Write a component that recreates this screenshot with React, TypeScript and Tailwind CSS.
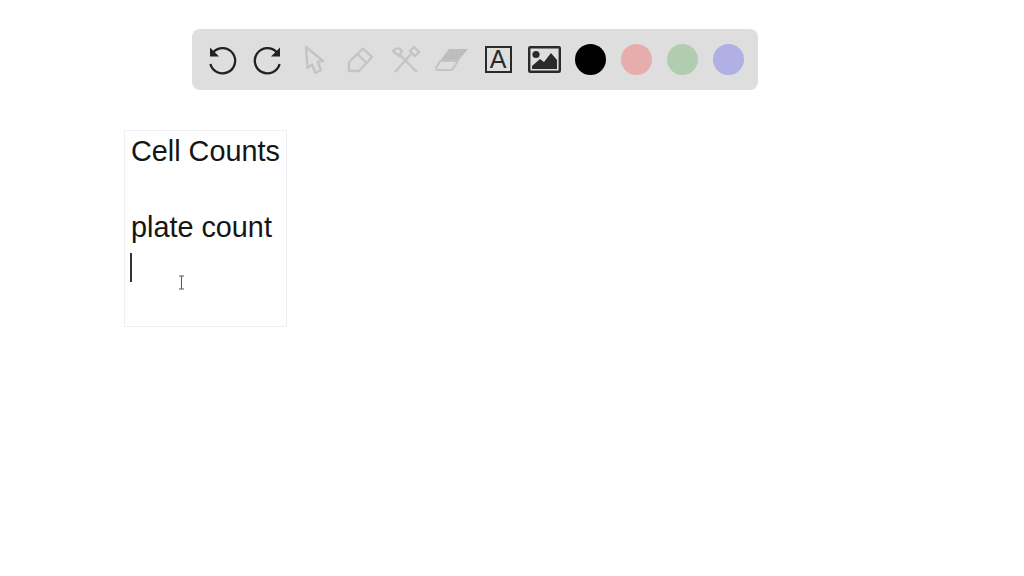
import type { ReactNode } from "react"

function ToolIcon({ children }: { children: ReactNode }) {
  return <div className="flex h-[46px] w-[46px] items-center justify-center">{children}</div>
}

function Swatch({ className }: { className: string }) {
  return (
    <ToolIcon>
      <div className={`h-[31px] w-[31px] rounded-full ${className}`} />
    </ToolIcon>
  )
}

export default function App() {
  return (
    <div className="h-[576px] w-[1024px] overflow-hidden bg-white pt-[29px] font-['Liberation_Sans',sans-serif]">
      <div className="ml-[192px] flex h-[61px] w-[566px] items-center rounded-[8px] bg-[#dedede] pl-[7px]">
        <ToolIcon>
          <svg width="32" height="32" viewBox="0 0 32 32" fill="none" stroke="#222" strokeWidth="2.3">
            <path d="M7.5 8 A12.6 12.6 0 1 1 4.4 20" />
            <path d="M4 3.5 L4 12.6 L13 12.6 Z" fill="#222" stroke="none" />
          </svg>
        </ToolIcon>
        <ToolIcon>
          <svg width="32" height="32" viewBox="0 0 32 32" fill="none" stroke="#222" strokeWidth="2.3">
            <path d="M24.5 8 A12.6 12.6 0 1 0 27.6 20" />
            <path d="M28 3.5 L28 12.6 L19 12.6 Z" fill="#222" stroke="none" />
          </svg>
        </ToolIcon>
        <ToolIcon>
          <svg width="24" height="30" viewBox="0 0 24 30" fill="none" stroke="#c4c4c4" strokeWidth="2.4" strokeLinejoin="round">
            <path d="M4 2 L21 16 L15.5 16.5 L19 25 L13.5 28 L10 19.5 L5.5 23 Z" />
          </svg>
        </ToolIcon>
        <ToolIcon>
          <svg width="28" height="28" viewBox="0 0 28 28" fill="none" stroke="#c4c4c4" strokeWidth="2.4" strokeLinejoin="round">
            <path d="M17 2.5 L26 11 L13 25 L3 25 L3 16 Z" />
            <path d="M11.5 8 L20.5 17" />
          </svg>
        </ToolIcon>
        <ToolIcon>
          <svg width="30" height="28" viewBox="0 0 30 28" fill="none" stroke="#c4c4c4" strokeWidth="2.4">
            <path d="M8 8 L26 26 M21 7 L4 26" />
            <path d="M2 5 C5 1 9 2 11 5 L8 10 C6 8 4 7 2 5 Z" />
            <path d="M19 5 L23 1 L28 6 L24 10 Z" />
          </svg>
        </ToolIcon>
        <ToolIcon>
          <svg width="34" height="24" viewBox="0 0 34 24" fill="none">
            <path d="M14 1 L33 1 L23 13 L5 13 Z" fill="#bdbdbd" />
            <path d="M5 13 L23 13 L17 22 L2 22 L1 20 Z" stroke="#c4c4c4" strokeWidth="2" strokeLinejoin="round" />
          </svg>
        </ToolIcon>
        <ToolIcon>
          <div className="flex h-[27px] w-[27px] items-center justify-center border-[2.5px] border-[#2a2a2a] text-[25px] leading-none text-[#2a2a2a]">
            A
          </div>
        </ToolIcon>
        <ToolIcon>
          <svg width="33" height="27" viewBox="0 0 33 27" fill="none">
            <rect x="1.2" y="1.2" width="30.6" height="24.6" rx="1" stroke="#2a2a2a" strokeWidth="2.4" />
            <circle cx="8" cy="8.5" r="3.6" fill="#2a2a2a" />
            <path d="M4 23 L4 20 L12 13 L16 16 L23 7 L29 14 L29 23 Z" fill="#2a2a2a" />
          </svg>
        </ToolIcon>
        <Swatch className="bg-black" />
        <Swatch className="bg-[#e7adad]" />
        <Swatch className="bg-[#b0cdb0]" />
        <Swatch className="bg-[#b0b0e4]" />
      </div>
      <div className="relative ml-[124px] mt-[40px] h-[197px] w-[163px] border border-[#eeeef4] pl-[6px] pt-[1px] text-[28.8px] leading-[38px] text-[#151515]">
        <div>Cell Counts</div>
        <div className="h-[38px]" />
        <div>plate count</div>
        <div className="absolute left-[4.5px] top-[122px] h-[29px] w-[2px] bg-[#333]" />
        <svg className="absolute left-[53px] top-[144px]" width="7" height="15" viewBox="0 0 7 15" fill="none" stroke="#555" strokeWidth="1">
          <path d="M1 1 L6 1 M3.5 1 L3.5 14 M1 14 L6 14" />
        </svg>
      </div>
    </div>
  )
}
